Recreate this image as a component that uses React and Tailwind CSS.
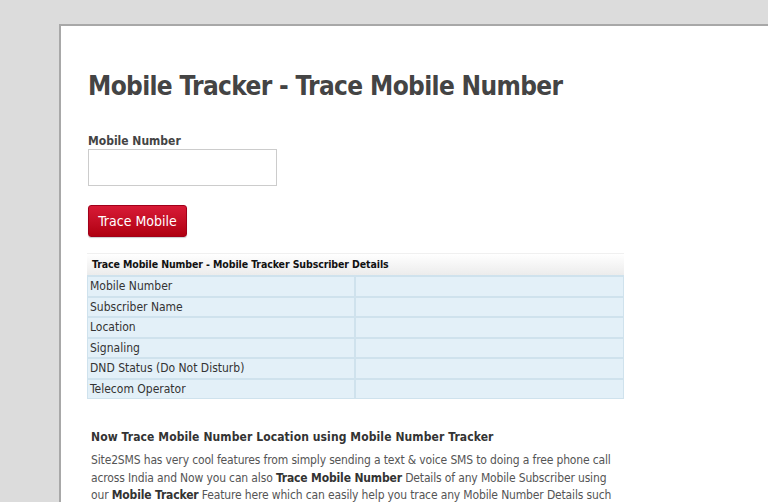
import React from 'react';

const ROWS = [
  'Mobile Number',
  'Subscriber Name',
  'Location',
  'Signaling',
  'DND Status (Do Not Disturb)',
  'Telecom Operator',
];

const COND = { fontFamily: '"DejaVu Sans Condensed", "DejaVu Sans", sans-serif' };

const App = () => {
  return (
    <div className="min-h-[502px] bg-[#dcdcdc] pt-6 pl-[59px] overflow-hidden" style={COND}>
      <div className="bg-white border-t-2 border-l-2 border-[#a8a8a8] min-h-[478px] pl-[27px] pt-[44px]">
        {/* Заголовок */}
        <h1 className="text-[26px] font-bold text-[#444] leading-[32px] tracking-[-0.65px]">
          Mobile Tracker - Trace Mobile Number
        </h1>

        {/* Форма */}
        <div className="mt-[32px]">
          <label className="block text-[12px] font-bold text-[#444] leading-[15px]">Mobile Number</label>
          <input
            type="text"
            className="block w-[189px] h-[37px] border border-[#cccccc] bg-white outline-none"
          />
          <button className="mt-[19px] w-[99px] h-[32px] rounded-[3px] border border-[#a0001a] bg-gradient-to-b from-[#d81a36] to-[#b0000f] text-white text-[14px] leading-[20px] shadow-[0_1px_1px_rgba(0,0,0,0.2)]">
            Trace Mobile
          </button>
        </div>

        {/* Таблица */}
        <div className="mt-[16px] -ml-px w-[537px]">
          <div className="h-[22px] bg-gradient-to-b from-[#ffffff] to-[#ececec] border-t border-[#f0f0f0] pl-[5px] flex items-center text-[10.5px] font-bold text-[#111] tracking-[-0.1px]">
            Trace Mobile Number - Mobile Tracker Subscriber Details
          </div>
          <div className="grid grid-cols-[266px_1fr] gap-[2px] bg-[#cfe2ed] p-[1px] pt-[2px]">
            {ROWS.map((r) => (
              <React.Fragment key={r}>
                <div className="h-[18.5px] bg-[#e3f0f8] pl-[2px] flex items-center text-[12px] text-[#333]">{r}</div>
                <div className="h-[18.5px] bg-[#e3f0f8]" />
              </React.Fragment>
            ))}
          </div>
        </div>

        {/* Текст */}
        <div className="mt-[30px] pl-[3px]">
          <h3 className="text-[12px] font-bold text-[#333] leading-[16px] tracking-[0.1px]">
            Now Trace Mobile Number Location using Mobile Number Tracker
          </h3>
          <p className="mt-[7px] text-[12px] text-[#555] leading-[17.5px] tracking-[-0.15px] whitespace-nowrap">
            Site2SMS has very cool features from simply sending a text &amp; voice SMS to doing a free phone call
            <br />
            across India and Now you can also <b className="text-[#333]">Trace Mobile Number</b> Details of any Mobile Subscriber using
            <br />
            our <b className="text-[#333]">Mobile Tracker</b> Feature here which can easily help you trace any Mobile Number Details such
            <br />
            as Location, Operator and Signaling.
          </p>
        </div>
      </div>
    </div>
  );
};

export default App;
